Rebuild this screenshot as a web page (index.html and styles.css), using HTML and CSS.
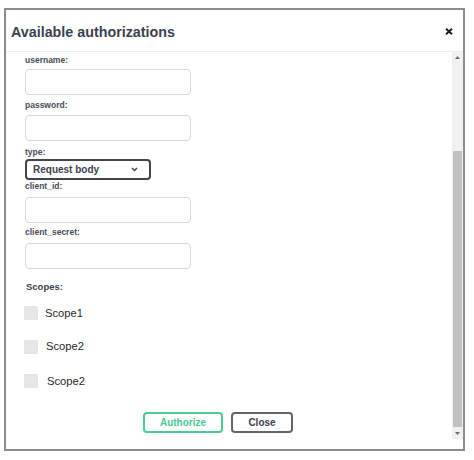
FILE: index.html
```html
<!DOCTYPE html>
<html>
<head>
<meta charset="utf-8">
<link rel="stylesheet" href="styles.css">
</head>
<body>
<div class="modal">
  <div class="modal-header">
    <h3 class="modal-title">Available authorizations</h3>
    <button class="close-x" aria-label="Close">
      <svg width="8" height="7" viewBox="0 0 8 7"><path d="M1 0.8 L7 6.2 M7 0.8 L1 6.2" stroke="#1a1a1a" stroke-width="1.9" stroke-linecap="butt"/></svg>
    </button>
  </div>
  <div class="modal-body">
    <div class="content">
      <label class="field-label l-user">username:</label>
      <input class="text-input i-user" type="text">
      <label class="field-label l-pass">password:</label>
      <input class="text-input" type="password">
      <label class="field-label l-type">type:</label>
      <div class="select">
        <span>Request body</span>
        <svg width="7" height="5" viewBox="0 0 7 5"><path d="M1 1 L3.5 3.6 L6 1" fill="none" stroke="#3b4151" stroke-width="1.4"/></svg>
      </div>
      <label class="field-label l-cid">client_id:</label>
      <input class="text-input" type="text">
      <label class="field-label l-csec">client_secret:</label>
      <input class="text-input" type="text">
      <div class="scopes-title">Scopes:</div>
      <div class="scope s1"><span class="checkbox"></span><span class="scope-name">Scope1</span></div>
      <div class="scope s2"><span class="checkbox"></span><span class="scope-name">Scope2</span></div>
      <div class="scope s3"><span class="checkbox"></span><span class="scope-name">Scope2</span></div>
      <div class="actions">
        <button class="btn btn-authorize">Authorize</button>
        <button class="btn btn-close">Close</button>
      </div>
    </div>
    <div class="scrollbar">
      <div class="sb-btn"><svg width="5" height="3" viewBox="0 0 5 3"><path d="M0 3 L2.5 0 L5 3 Z" fill="#6e6e6e"/></svg></div>
      <div class="sb-track"><div class="sb-thumb"></div></div>
      <div class="sb-btn"><svg width="5" height="3" viewBox="0 0 5 3"><path d="M0 0 L2.5 3 L5 0 Z" fill="#6e6e6e"/></svg></div>
    </div>
  </div>
  <div class="modal-foot"></div>
</div>
</body>
</html>
```
FILE: styles.css
```css
* { box-sizing: border-box; }
html, body { margin: 0; padding: 0; background: #fff; }
body {
  font-family: "Liberation Sans", Arial, sans-serif;
  color: #3b4151;
  padding: 8px 0 0 4px;
}
.modal {
  width: 461px;
  height: 443px;
  border: 2px solid #8c8c8c;
  background: #fff;
  display: flex;
  flex-direction: column;
}
.modal-header {
  height: 42px;
  flex: 0 0 42px;
  border-bottom: 1px solid #ececec;
  display: flex;
  align-items: center;
  justify-content: space-between;
  padding: 2px 10px 0 5px;
}
.modal-title {
  margin: 0;
  font-size: 14.3px;
  font-weight: bold;
  color: #3b4151;
}
.close-x {
  border: 0;
  background: none;
  padding: 0;
  width: 8px;
  height: 7px;
  display: flex;
}
.modal-body {
  flex: 0 0 387px;
  height: 387px;
  display: flex;
}
.modal-foot { flex: 1; }
.content {
  flex: 1;
  overflow: hidden;
  padding-left: 19px;
  display: flex;
  flex-direction: column;
  align-items: flex-start;
}
.field-label {
  display: block;
  font-size: 8.5px;
  font-weight: bold;
  line-height: 12px;
  height: 12px;
  color: #474c59;
}
.l-user { margin-top: 2px; margin-bottom: 3px; }
.l-pass { margin-top: 4px; margin-bottom: 4px; }
.l-type { margin-top: 5px; margin-bottom: 1px; }
.l-cid { margin-top: 0; margin-bottom: 5px; }
.l-csec { margin-top: 3px; margin-bottom: 5px; }
.text-input {
  width: 166px;
  height: 26px;
  border: 1px solid #d9d9d9;
  border-radius: 4px;
  background: #fff;
  margin: 0;
  padding: 0;
}
.select {
  width: 126px;
  height: 21px;
  border: 2px solid #41444e;
  border-radius: 4px;
  display: flex;
  align-items: center;
  justify-content: space-between;
  padding: 0 11px 0 6px;
  font-size: 10px;
  font-weight: bold;
  color: #3b4151;
}
.select svg { display: block; }
.scopes-title {
  margin-top: 12px;
  font-size: 9.5px;
  font-weight: bold;
  line-height: 12px;
  height: 12px;
  padding-left: 1px;
  color: #3b4151;
}
.scope {
  display: flex;
  align-items: center;
  height: 14px;
  margin-left: -1px;
}
.s1 { margin-top: 13px; }
.s2 { margin-top: 20px; }
.s3 { margin-top: 20px; }
.checkbox {
  width: 14px;
  height: 14px;
  background: #e6e6e6;
  border-radius: 1px;
  flex: 0 0 14px;
}
.scope-name {
  font-size: 11.2px;
  color: #2a2a2a;
  margin-left: 7px;
}
.s1 .scope-name { margin-top: -1px; }
.s2 .scope-name { margin-left: 8px; margin-top: -2px; }
.s3 .scope-name { margin-left: 9px; margin-top: 0; }
.actions {
  margin-top: 24px;
  padding-left: 118px;
  display: flex;
  gap: 8px;
}
.btn {
  height: 21px;
  border-radius: 4px;
  background: #fff;
  font-family: "Liberation Sans", Arial, sans-serif;
  font-size: 10px;
  font-weight: bold;
  padding: 0;
  display: flex;
  align-items: center;
  justify-content: center;
}
.btn-authorize {
  width: 80px;
  border: 2px solid #49cc90;
  color: #49cc90;
}
.btn-close {
  width: 62px;
  border: 2px solid #666;
  color: #3b4151;
}
.scrollbar {
  width: 11px;
  flex: 0 0 11px;
  background: #f1f1f1;
  display: flex;
  flex-direction: column;
}
.sb-btn {
  height: 11px;
  flex: 0 0 11px;
  display: flex;
  align-items: center;
  justify-content: center;
}
.sb-btn svg { display: block; }
.sb-track { flex: 1; }
.sb-thumb {
  margin-top: 88px;
  height: 276px;
  margin-left: 1px;
  margin-right: 1px;
  background: #c1c1c1;
}
```
